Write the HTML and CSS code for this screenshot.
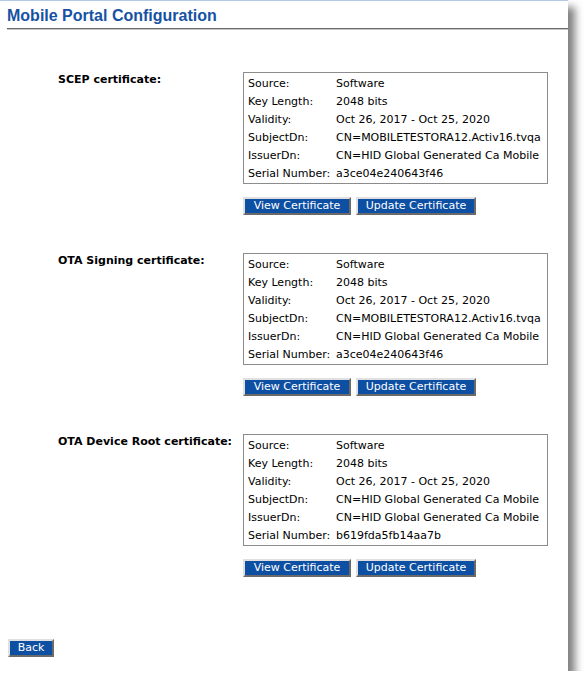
FILE: index.html
```html
<!DOCTYPE html>
<html lang="en">
<head>
    <meta charset="UTF-8">
    <title>Mobile Portal Configuration</title>
    <link rel="stylesheet" href="styles.css">
</head>
<body>
    <div class="window">
        <div class="header">
            <h1>Mobile Portal Configuration</h1>
        </div>

        <div class="content">
            <div class="cert-row">
                <div class="cert-label">SCEP certificate:</div>
                <div class="cert-body">
                    <table class="cert-info">
                        <tr><td class="key">Source:</td><td>Software</td></tr>
                        <tr><td class="key">Key Length:</td><td>2048 bits</td></tr>
                        <tr><td class="key">Validity:</td><td>Oct 26, 2017 - Oct 25, 2020</td></tr>
                        <tr><td class="key">SubjectDn:</td><td>CN=MOBILETESTORA12.Activ16.tvqa</td></tr>
                        <tr><td class="key">IssuerDn:</td><td>CN=HID Global Generated Ca Mobile</td></tr>
                        <tr><td class="key">Serial Number:</td><td>a3ce04e240643f46</td></tr>
                    </table>
                    <div class="actions">
                        <button class="button view">View Certificate</button>
                        <button class="button update">Update Certificate</button>
                    </div>
                </div>
            </div>

            <div class="cert-row">
                <div class="cert-label">OTA Signing certificate:</div>
                <div class="cert-body">
                    <table class="cert-info">
                        <tr><td class="key">Source:</td><td>Software</td></tr>
                        <tr><td class="key">Key Length:</td><td>2048 bits</td></tr>
                        <tr><td class="key">Validity:</td><td>Oct 26, 2017 - Oct 25, 2020</td></tr>
                        <tr><td class="key">SubjectDn:</td><td>CN=MOBILETESTORA12.Activ16.tvqa</td></tr>
                        <tr><td class="key">IssuerDn:</td><td>CN=HID Global Generated Ca Mobile</td></tr>
                        <tr><td class="key">Serial Number:</td><td>a3ce04e240643f46</td></tr>
                    </table>
                    <div class="actions">
                        <button class="button view">View Certificate</button>
                        <button class="button update">Update Certificate</button>
                    </div>
                </div>
            </div>

            <div class="cert-row">
                <div class="cert-label">OTA Device Root certificate:</div>
                <div class="cert-body">
                    <table class="cert-info">
                        <tr><td class="key">Source:</td><td>Software</td></tr>
                        <tr><td class="key">Key Length:</td><td>2048 bits</td></tr>
                        <tr><td class="key">Validity:</td><td>Oct 26, 2017 - Oct 25, 2020</td></tr>
                        <tr><td class="key">SubjectDn:</td><td>CN=HID Global Generated Ca Mobile</td></tr>
                        <tr><td class="key">IssuerDn:</td><td>CN=HID Global Generated Ca Mobile</td></tr>
                        <tr><td class="key">Serial Number:</td><td>b619fda5fb14aa7b</td></tr>
                    </table>
                    <div class="actions">
                        <button class="button view">View Certificate</button>
                        <button class="button update">Update Certificate</button>
                    </div>
                </div>
            </div>
        </div>

        <div class="footer">
            <button class="button back">Back</button>
        </div>
    </div>
</body>
</html>
```

FILE: styles.css
```css
body {
    margin: 0;
    padding: 0;
    background: #ffffff;
    font-family: "DejaVu Sans", Verdana, sans-serif;
    font-size: 11px;
    color: #000;
}
.window {
    width: 568px;
    height: 671px;
    background: #fff;
    border-top: 1px solid #b4cbe8;
    box-sizing: border-box;
    box-shadow: 7px 7px 8px rgba(0, 0, 0, 0.5);
    display: flex;
    flex-direction: column;
}
.header {
    margin-left: 7px;
    height: 27px;
    border-bottom: 1px solid #6a6a6a;
    box-shadow: 0 1px 0 #c8c8c8;
}
.header h1 {
    margin: 0;
    padding-top: 5px;
    font-family: "Liberation Sans", Arial, sans-serif;
    font-size: 16px;
    line-height: 19px;
    font-weight: bold;
    color: #1652a3;
}
.content {
    flex: 1;
    padding: 43px 0 0 58px;
}
.cert-row {
    display: flex;
    margin-bottom: 38px;
}
.cert-label {
    width: 185px;
    padding-top: 2px;
    font-weight: bold;
    line-height: 12px;
}
.cert-info {
    width: 305px;
    border: 1px solid #8c8c8c;
    border-collapse: separate;
    border-spacing: 0;
    padding: 2px 3px 0 4px;
}
.cert-info td {
    padding: 0;
    height: 18px;
    line-height: 18px;
    white-space: nowrap;
}
.cert-info td.key {
    width: 88px;
}
.actions {
    display: flex;
    gap: 5px;
    margin-top: 13px;
}
.button {
    height: 18px;
    padding: 0;
    background: #0d4fa3;
    color: #fff;
    font-family: "DejaVu Sans", Verdana, sans-serif;
    font-size: 11px;
    line-height: 14px;
    border: 2px solid;
    border-color: #e0e0e0 #6a6a6a #6a6a6a #e0e0e0;
    cursor: pointer;
}
.view {
    width: 108px;
}
.update {
    width: 120px;
}
.footer {
    padding: 0 0 14px 8px;
}
.back {
    width: 46px;
}
```
